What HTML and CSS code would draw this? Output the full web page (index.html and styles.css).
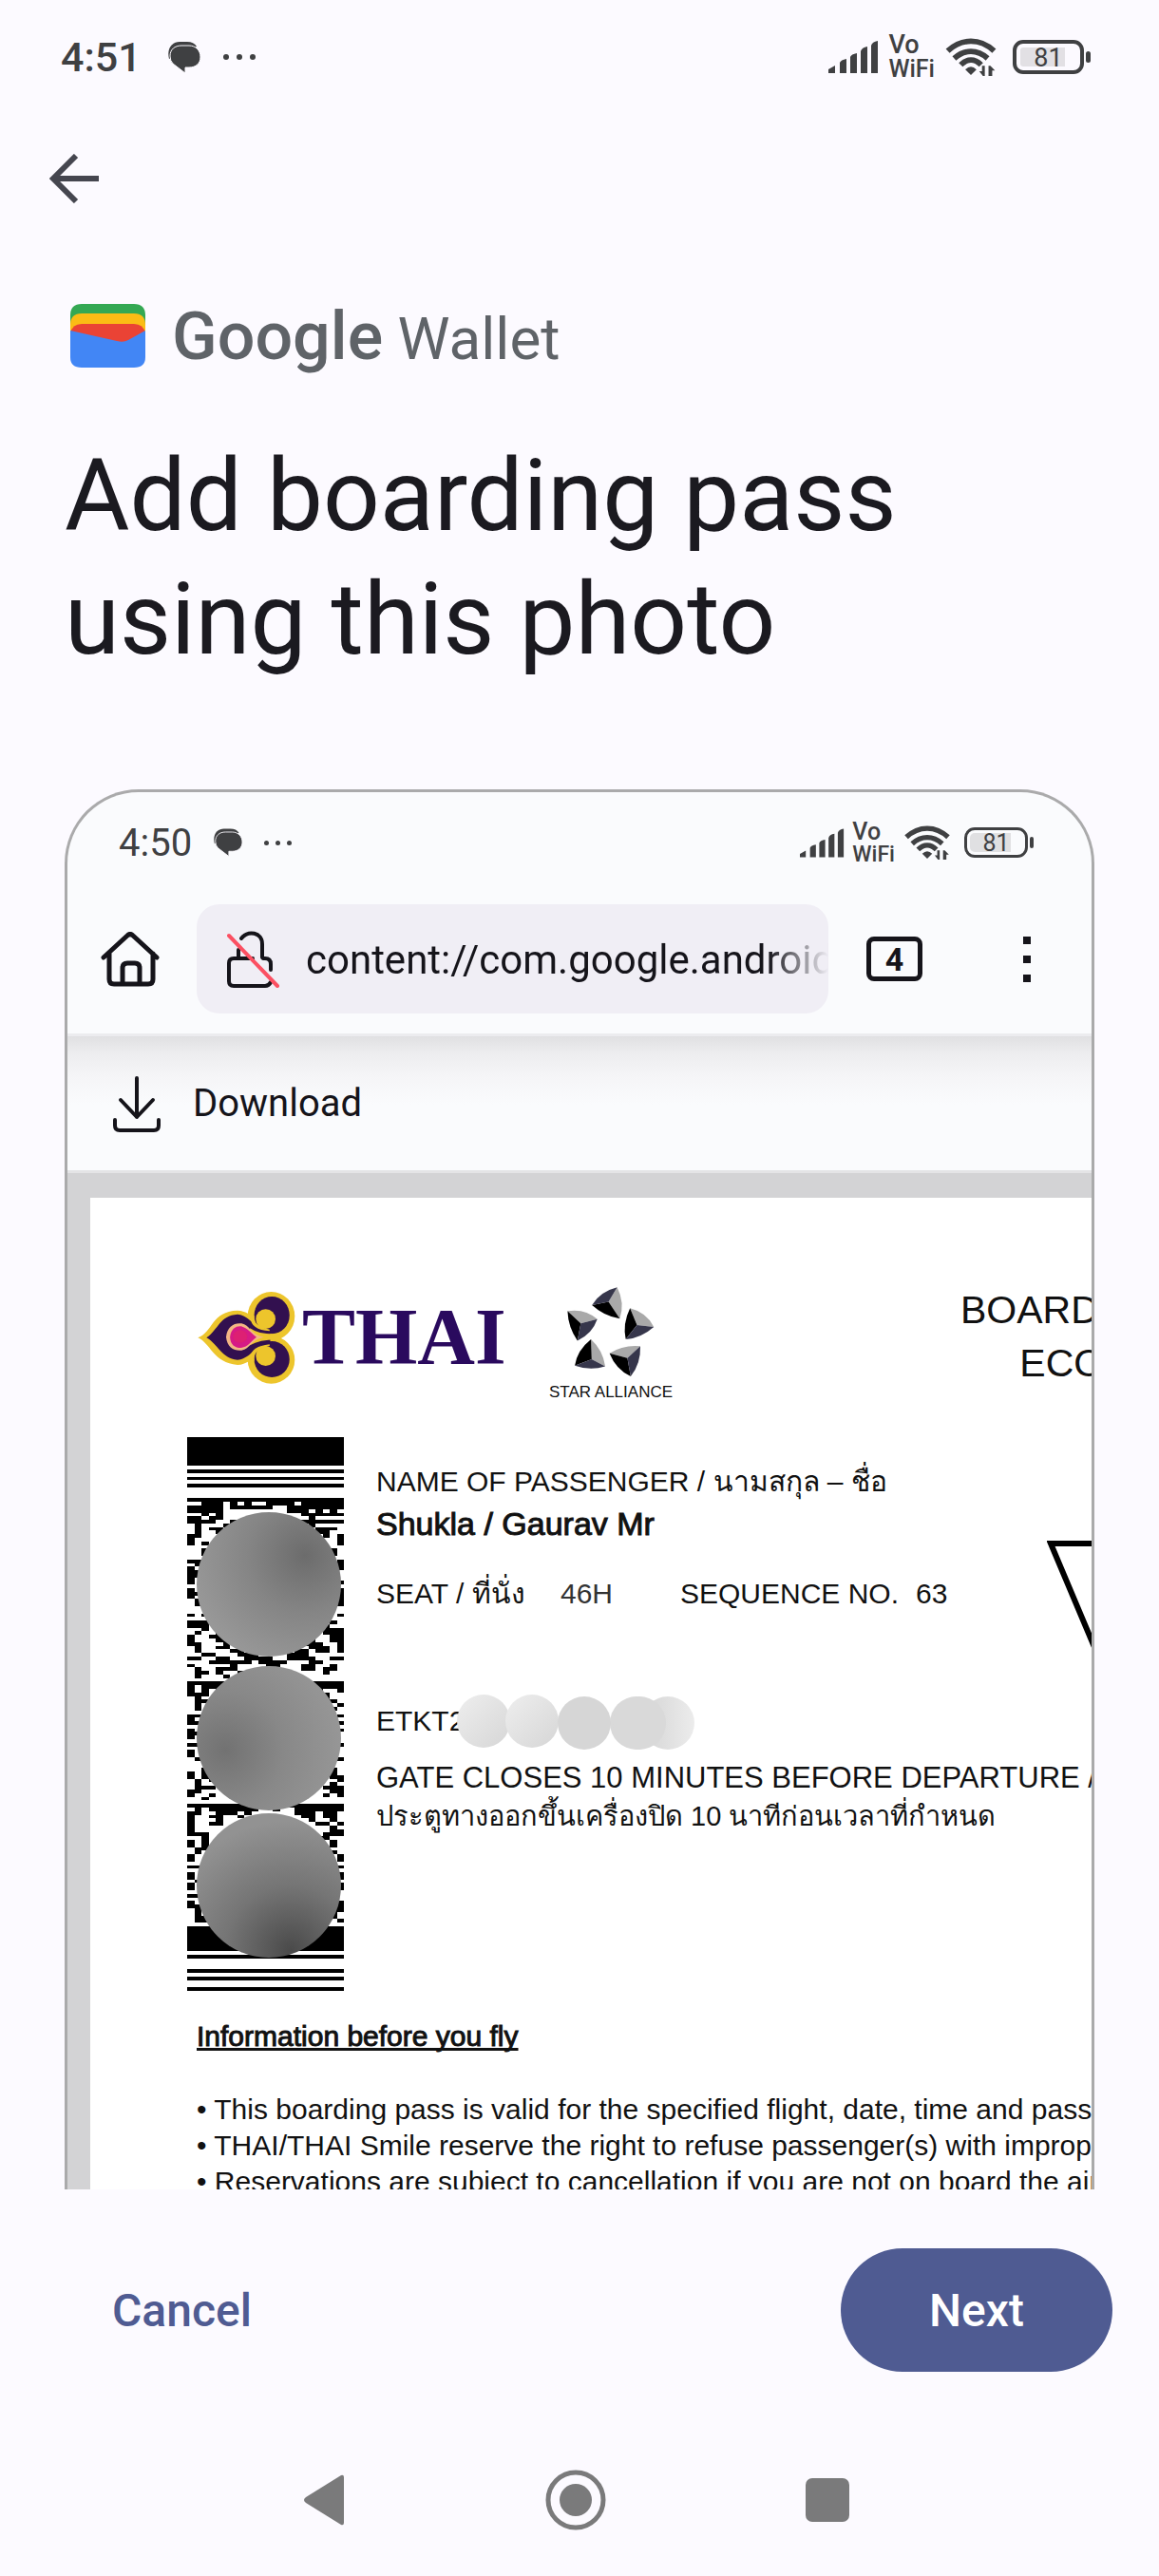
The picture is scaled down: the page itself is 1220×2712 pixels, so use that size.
FILE: index.html
```html
<!DOCTYPE html>
<html lang="en">
<head>
    <meta charset="UTF-8">
    <meta name="viewport" content="width=device-width, initial-scale=1.0">
    <title>Google Wallet</title>
    <link rel="stylesheet" href="styles.css">
</head>
<body>
    <!-- shared status bar icons -->
    <svg class="sprite" aria-hidden="true">
        <symbol id="chat" viewBox="0 0 34 33">
            <path d="M1 18C-2 6 5 0 12 0h8q7 0 10 5z" fill="currentColor"/>
            <path d="M2 15C2 8 7 4 14 4h8c7 0 12 5 12 12s-5 11-12 11h-4v6L5 23Q2 20 2 15z" fill="currentColor" stroke="#fcfaff" stroke-width="1"/>
        </symbol>
        <symbol id="signal" viewBox="0 0 53 34">
            <path d="M0 34v-4l7-4v8zM12 34V23q1-3 7-4v15zM23 34V17q1-3 7-4v21zM34 34V11q1-4 7-5v28zM45 34V5q1-4 7-5v34z" fill="currentColor"/>
        </symbol>
        <symbol id="wifi" viewBox="0 0 54 41">
            <g fill="none" stroke="currentColor" stroke-width="6">
                <path d="M2 14C17 0 37 0 52 14"/>
                <path d="M9 22c11-10 25-10 36 0"/>
                <path d="M16 29c7-7 15-7 22 0"/>
            </g>
            <path d="M21 34q6-6 12 0l-6 6z" fill="currentColor"/>
            <path d="M42 30v11h-2l-4-5h3v-6zM46 41V30h2l5 5h-3v6z" fill="currentColor"/>
        </symbol>
    </svg>

    <div class="status-bar">
        <span class="time">4:51</span>
        <svg class="chat"><use href="#chat"/></svg>
        <span class="more"><i></i><i></i><i></i></span>
        <svg class="signal"><use href="#signal"/></svg>
        <span class="vowifi"><span>Vo</span><br>WiFi</span>
        <svg class="wifi"><use href="#wifi"/></svg>
        <span class="battery">81</span>
    </div>

    <header class="app-bar">
        <button class="icon-button" type="button" aria-label="Back">
            <svg width="54" height="52" viewBox="0 0 54 52" fill="none" stroke="#45464f" stroke-width="6">
                <path d="M29 2L5 26l24 24M5 26h48"/>
            </svg>
        </button>
    </header>

    <main class="content">
        <div class="brand">
            <svg width="79" height="67" viewBox="0 0 79 67">
                <path d="M0 12Q0 0 12 0h55q12 0 12 12v30H0z" fill="#34a853"/>
                <path d="M0 22q0-12 12-12h55q12 0 12 12v20H0z" fill="#fbbc15"/>
                <path d="M0 31q2-10 12-10h55q10 0 12 10v12H0z" fill="#ea4335"/>
                <path d="M0 28l49 11q7 2 12-1l18-10v28q0 11-12 11H12Q0 67 0 56z" fill="#4286f5"/>
            </svg>
            <span class="brand-name"><b>Google</b> Wallet</span>
        </div>
        <h1>Add boarding pass<br>using this photo</h1>

        <section class="preview" aria-label="Photo">
            <div class="status-bar small">
                <span class="time">4:50</span>
                <svg class="chat"><use href="#chat"/></svg>
                <span class="more"><i></i><i></i><i></i></span>
                <svg class="signal"><use href="#signal"/></svg>
                <span class="vowifi"><span>Vo</span><br>WiFi</span>
                <svg class="wifi"><use href="#wifi"/></svg>
                <span class="battery">81</span>
            </div>

            <div class="toolbar">
                <button class="icon-button" type="button" aria-label="Home">
                    <svg width="62" height="58" viewBox="0 0 62 58" fill="none" stroke="#15141a" stroke-width="5" stroke-linecap="round" stroke-linejoin="round">
                        <path d="M3 27L28 4q3-3 6 0l25 23M9 23v27q0 5 5 5h36q5 0 5-5V23"/>
                        <path d="M23 54V38q0-5 5-5h8q5 0 5 5v16"/>
                    </svg>
                </button>
                <div class="url-box">
                    <svg width="56" height="60" viewBox="0 0 56 60" fill="none" stroke-width="5" stroke-linecap="round">
                        <path d="M15 8C22-1 37 1 37 14v14M12 20v9" stroke="#15141a" stroke-width="4"/>
                        <path d="M27 29H7q-5 0-5 5v19q0 5 5 5h33q4 0 6-4M38 29h2q6 0 6 6v6" stroke="#15141a" stroke-width="4"/>
                        <path d="M2 5l51 53" stroke="#fb5062" stroke-width="4"/>
                    </svg>
                    <input type="text" aria-label="Address" value="content://com.google.android">
                </div>
                <button class="tabs" type="button" aria-label="Tabs">4</button>
                <button class="menu" type="button" aria-label="Menu"><i></i><i></i><i></i></button>
            </div>

            <button class="download" type="button">
                <svg width="50" height="60" viewBox="0 0 50 60" fill="none" stroke="#15141a" stroke-width="4" stroke-linecap="round" stroke-linejoin="round">
                    <path d="M25 3v41M8 26l17 18 17-18M2 47v6q0 5 5 5h36q5 0 5-5v-6"/>
                </svg>
                Download
            </button>

            <div class="viewer">
                <article class="page">
                    <div class="page-head">
                        <div class="thai">
                            <svg width="105" height="100" viewBox="75 115 305 300" preserveAspectRatio="none">
                                <g fill="#edc52c">
                                    <ellipse cx="303" cy="198" rx="72" ry="77"/>
                                    <ellipse cx="303" cy="336" rx="72" ry="75"/>
                                    <path d="M79 266C125 248 120 182 200 180C250 183 262 230 330 266C262 300 250 350 200 352C125 345 118 284 79 266z"/>
                                </g>
                                <g fill="#32104f">
                                    <path d="M105 266C142 240 145 196 200 192C236 195 248 234 300 250L300 280C250 290 242 332 200 336C150 332 140 285 105 266z"/>
                                    <ellipse cx="305" cy="195" rx="54" ry="59"/>
                                    <ellipse cx="305" cy="334" rx="54" ry="57"/>
                                </g>
                                <!-- curls -->
                                <g fill="#edc52c">
                                    <ellipse cx="286" cy="207" rx="30" ry="31"/>
                                    <ellipse cx="286" cy="324" rx="30" ry="31"/>
                                    <path d="M252 196q-10 30 46 44l0 5q-58-4-58-42zM252 340q-10-34 46-48l0-5q-58 6-58 42z"/>
                                    <path d="M238 236q30 22 92 18v18q-60-2-92 18z"/>
                                </g>
                                <path d="M165 264C168 230 190 218 212 221C238 226 240 256 280 264C240 274 240 300 212 306C188 308 168 295 165 264z" fill="#f3b684"/>
                                <path d="M177 264C180 238 195 229 210 230C230 234 240 250 258 264C240 278 232 295 210 298C192 298 178 288 177 264z" fill="#d61a86"/>
                                <ellipse cx="208" cy="262" rx="22" ry="20" fill="#e3265f" opacity=".5"/>
                            </svg>
                            <span>THAI</span>
                        </div>
                        <div class="alliance">
                            <svg width="94" height="97" viewBox="1222 103 270 287" preserveAspectRatio="none">
                                <g fill="#a9a9a9">
                                    <path d="M1376 107Q1400 155 1384 204L1350 152z"/>
                                    <path d="M1415 172Q1465 185 1487 230L1436 224z"/>
                                    <path d="M1226 181Q1278 172 1316 206L1266 219z"/>
                                    <path d="M1297 269Q1333 303 1340 353L1299 331z"/>
                                    <path d="M1353 312Q1395 285 1446 290L1407 327z"/>
                                </g>
                                <g fill="#000">
                                    <path d="M1384 204Q1337 197 1300 162L1350 152z"/>
                                    <path d="M1415 172Q1392 220 1402 269L1436 224z"/>
                                    <path d="M1226 181Q1228 232 1256 273L1266 219z"/>
                                    <path d="M1297 269Q1255 303 1248 351L1299 331z"/>
                                    <path d="M1353 312Q1372 362 1417 384L1407 327z"/>
                                </g>
                                <g fill="#36364b">
                                    <path d="M1300 162Q1325 120 1376 107L1350 152z"/>
                                    <path d="M1402 269Q1450 264 1487 230L1436 224z"/>
                                    <path d="M1256 273Q1301 252 1316 206L1266 219z"/>
                                    <path d="M1248 351Q1295 368 1340 353L1299 331z"/>
                                    <path d="M1446 290Q1448 345 1417 384L1407 327z"/>
                                </g>
                            </svg>
                            <span>STAR ALLIANCE</span>
                        </div>
                        <div class="page-title">BOARDING PASS<br>ECONOMY</div>
                    </div>

                    <div class="pass">
                        <svg class="barcode" viewBox="0 0 165 583" role="img" aria-label="Barcode">
                            <defs>
                                <radialGradient id="blob-a" cx=".75" cy=".3" r=".8"><stop offset="0" stop-color="#6c6c6c"/><stop offset=".5" stop-color="#858585"/><stop offset="1" stop-color="#989898"/></radialGradient>
                                <radialGradient id="blob-b" cx=".2" cy=".58" r=".8"><stop offset="0" stop-color="#727272"/><stop offset=".5" stop-color="#888"/><stop offset="1" stop-color="#969696"/></radialGradient>
                                <radialGradient id="blob-c" cx=".65" cy=".95" r=".9"><stop offset="0" stop-color="#4a4a4a"/><stop offset=".5" stop-color="#757575"/><stop offset="1" stop-color="#929292"/></radialGradient>
                            </defs>
                            <svg width="165" height="583" viewBox="0 0 22 154" preserveAspectRatio="none" shape-rendering="crispEdges">
                                <!-- guard bars -->
                                <path d="M0 0h22v8H0zM0 9h22v1H0zM0 11h22v1H0zM0 13h22v1H0zM0 136h22v7H0zM0 144h22v1H0zM0 148h22v1H0zM0 150h22v1H0zM0 153h22v1H0z"/>
                                <!-- data rows -->
                                <path stroke="#000" fill="none" d="M0 17.5h22M2 18.5h3m1 0h1m1 0h1m2 0h4m1 0h6M0 19.5h5m1 0h6m2 0h8M0 20.5h5m9 0h3m1 0h1m1 0h1M2 21.5h1m1 0h1m11 0h6M0 22.5h2m1 0h2m12 0h1M0 23.5h4m2 0h1m9 0h6M1 24.5h1m3 0h2m10 0h1M1 25.5h1m1 0h2m13 0h2m0 0h1M1 26.5h1m2 0h1m13 0h2M0 27.5h2m17 0h1m1 0h1M0 28.5h1m20 0h1M0 29.5h1m1 0h1m18 0h1M2 31.5h1m17 0h1M2 32.5h1m17 0h1M0 34.5h3m18 0h1M1 35.5h1m19 0h1M0 36.5h1m1 0h1m18 0h1M0 37.5h2M0 38.5h2M0 39.5h1M0 40.5h1m20 0h1M0 42.5h1m20 0h1M0 43.5h2m19 0h1M0 44.5h1m20 0h1M1 45.5h1m19 0h1M1 46.5h1m18 0h2M0 49.5h1m1 0h1m18 0h1
                                M0 51.5h3m17 0h1M0 52.5h3m16 0h1M2 53.5h1m16 0h3M1 54.5h1m2 0h1m14 0h3M0 55.5h1m2 0h2m15 0h2M0 56.5h1m3 0h3m10 0h1m2 0h2M0 57.5h2m3 0h1m10 0h3m2 0h1M1 58.5h1m2 0h2m1 0h2m8 0h3m1 0h1M1 59.5h1m4 0h2m1 0h2m4 0h2m1 0h2m1 0h2M2 60.5h2m3 0h3m4 0h3M0 61.5h2m2 0h2m2 0h4m2 0h4m2 0h2M3 62.5h6m1 0h4m3 0h2M0 63.5h1m5 0h1m4 0h2m3 0h2m2 0h1M1 64.5h1m2 0h3m9 0h2m1 0h2M1 65.5h2m1 0h1m2 0h1m11 0h1M1 66.5h1m3 0h1M0 68.5h22M0 69.5h1m1 0h3m11 0h6M0 70.5h1m1 0h1m1 0h1m12 0h2m2 0h1M0 71.5h3m1 0h1m13 0h2M1 72.5h1m17 0h1M1 73.5h3m14 0h3M1 74.5h1m19 0h1M1 75.5h1m18 0h1M0 77.5h3m18 0h1M0 78.5h1m1 0h1M0 79.5h2m19 0h1M0 81.5h1m20 0h1M0 82.5h2M0 83.5h1M0 85.5h2m19 0h1M0 87.5h1M0 88.5h1M1 89.5h1m18 0h2M2 92.5h1m17 0h1M0 93.5h1m1 0h1m17 0h1M0 94.5h1m1 0h2m16 0h2M1 95.5h1m1 0h1m17 0h1M1 96.5h1m2 0h1m15 0h1M1 97.5h3m15 0h2m0 0h1M0 98.5h2m18 0h2M0 99.5h1m2 0h1m15 0h1m1 0h1M2 100.5h1
                                M0 102.5h22M1 103.5h1m1 0h7m2 0h1m2 0h7M0 104.5h2m2 0h3m1 0h1m6 0h3m1 0h2M0 105.5h1m2 0h2m2 0h1m8 0h2m1 0h2M0 106.5h1m3 0h1m12 0h1m2 0h1M0 107.5h1m2 0h2m13 0h2m1 0h1M0 108.5h1m19 0h1M0 109.5h1m19 0h2M0 110.5h3m16 0h3M2 111.5h1m15 0h2M0 112.5h1m1 0h1m17 0h1M0 113.5h1m1 0h1m17 0h1M1 114.5h2M1 115.5h1m18 0h1M0 116.5h1m20 0h1M0 117.5h1m20 0h1M0 119.5h2m18 0h2M0 121.5h1m20 0h1M0 122.5h1m20 0h1M1 123.5h1M0 124.5h1m20 0h1M0 125.5h1m20 0h1M0 127.5h2M0 129.5h1m20 0h1M0 130.5h2m19 0h1M1 131.5h1m18 0h2M1 132.5h1m18 0h1M1 133.5h3m15 0h2M1 134.5h2m18 0h1"/>
                            </svg>
                            <circle cx="86" cy="155" r="76" fill="url(#blob-a)"/>
                            <circle cx="86" cy="317" r="76" fill="url(#blob-b)"/>
                            <circle cx="86" cy="472" r="76" fill="url(#blob-c)"/>
                        </svg>
                        <div class="details">
                            <p class="label">NAME OF PASSENGER / นามสกุล – ชื่อ</p>
                            <p class="name">Shukla / Gaurav Mr</p>
                            <p class="seat">
                                <span class="seat-label">SEAT / ที่นั่ง</span>
                                <span class="seat-no">46H</span>
                                <span>SEQUENCE NO.</span>
                                <span class="sequence-no">63</span>
                            </p>
                            <p class="ticket">ETKT2
                                <svg width="252" height="60" viewBox="0 0 252 60">
                                    <defs>
                                        <linearGradient id="mask-a" x2="1" y2="1"><stop offset="0" stop-color="#eee"/><stop offset="1" stop-color="#d6d6d6"/></linearGradient>
                                        <linearGradient id="mask-b" x2="1"><stop offset="0" stop-color="#d4d4d4"/><stop offset="1" stop-color="#ececec"/></linearGradient>
                                    </defs>
                                    <circle cx="29" cy="29" r="28" fill="url(#mask-a)"/>
                                    <circle cx="80" cy="29" r="28" fill="url(#mask-a)"/>
                                    <circle cx="223" cy="31" r="28" fill="url(#mask-b)"/>
                                    <circle cx="190" cy="31" r="28" fill="#d9d9d9"/>
                                    <circle cx="193" cy="31" r="28" fill="#d9d9d9"/>
                                    <circle cx="135" cy="31" r="28" fill="#d6d6d6"/>
                                </svg>
                            </p>
                            <p class="gate">GATE CLOSES 10 MINUTES BEFORE DEPARTURE /</p>
                            <p class="gate-thai">ประตูทางออกขึ้นเครื่องปิด 10 นาทีก่อนเวลาที่กำหนด</p>
                        </div>
                        <svg class="triangle" width="210" height="300" viewBox="0 0 210 300" fill="none" stroke="#000" stroke-width="6">
                            <path d="M4 3h200L104 240z"/>
                        </svg>
                    </div>

                    <div class="notes">
                        <h2>Information before you fly</h2>
                        <ul>
                            <li>This boarding pass is valid for the specified flight, date, time and passenger</li>
                            <li>THAI/THAI Smile reserve the right to refuse passenger(s) with improper</li>
                            <li>Reservations are subject to cancellation if you are not on board the aircraft</li>
                        </ul>
                    </div>
                </article>
            </div>
        </section>
    </main>

    <footer class="actions">
        <button class="cancel" type="button">Cancel</button>
        <button class="next" type="button">Next</button>
    </footer>

    <nav class="nav-bar" aria-label="System">
        <button type="button" aria-label="Back">
            <svg width="44" height="54" viewBox="0 0 44 54" fill="#7a7a7b"><path d="M40 1q3-1 3 2v48q0 3-3 2L3 30q-4-3 0-6z"/></svg>
        </button>
        <button type="button" aria-label="Home">
            <svg width="64" height="64" viewBox="0 0 64 64" fill="#7a7a7b"><circle cx="32" cy="32" r="29" fill="none" stroke="#7a7a7b" stroke-width="5"/><circle cx="32" cy="32" r="17"/></svg>
        </button>
        <button type="button" aria-label="Recents">
            <svg width="46" height="46" viewBox="0 0 46 46" fill="#7a7a7b"><rect width="46" height="46" rx="7"/></svg>
        </button>
    </nav>
</body>
</html>
```
FILE: styles.css
```css
* {
    box-sizing: border-box;
}

body {
    margin: 0;
    height: 100vh;
    display: flex;
    flex-direction: column;
    overflow: hidden;
    background-color: #fcfaff;
    color: #1b1a20;
    font-family: Roboto, "Liberation Sans", sans-serif;
}
button {
    margin: 0;
    padding: 0;
    border: 0;
    background: none;
    color: inherit;
    font-family: inherit;
}
svg {
    display: block;
    flex: none;
}
.sprite {
    width: 0;
    height: 0;
}

/* status bar */
.status-bar {
    display: flex;
    align-items: center;
    flex: none;
    height: 120px;
    padding: 0 79px 0 64px;
    color: #3f4042;
}
.time {
    font-size: 43px;
    font-weight: 500;
}
.chat {
    width: 34px;
    height: 33px;
    margin-left: 28px;
}
.more {
    display: flex;
    gap: 8px;
    margin-left: 24px;
    margin-right: auto;
}
.more i {
    width: 6px;
    height: 6px;
    border-radius: 50%;
    background-color: currentColor;
}
.signal {
    width: 53px;
    height: 34px;
}
.vowifi {
    margin-left: 10px;
    font-size: 25px;
    line-height: 25px;
    font-weight: 500;
}
.vowifi span {
    font-size: 27px;
}
.wifi {
    width: 54px;
    height: 40px;
    margin-left: 11px;
}
.battery {
    position: relative;
    width: 75px;
    height: 36px;
    margin-left: 17px;
    padding: 4px;
    border: 4px solid currentColor;
    border-radius: 11px;
    background: linear-gradient(90deg, #e2e0e4 47px, transparent 47px) content-box no-repeat;
    font-size: 27px;
    line-height: 22px;
    text-align: center;
}
.battery::after {
    content: "";
    position: absolute;
    right: -11px;
    top: 8px;
    width: 5px;
    height: 12px;
    border-radius: 3px;
    background-color: currentColor;
}

.status-bar.small {
    height: 106px;
    padding: 0 67px 0 54px;
}
.small .time {
    font-size: 40px;
    font-weight: 400;
}
.small .chat {
    width: 30px;
    height: 30px;
    margin-left: 23px;
}
.small .more {
    gap: 7px;
    margin-left: 23px;
}
.small .more i {
    width: 5px;
    height: 5px;
}
.small .signal {
    width: 47px;
    height: 31px;
}
.small .vowifi {
    margin-left: 8px;
    font-size: 23px;
    line-height: 23px;
}
.small .vowifi span {
    font-size: 25px;
}
.small .wifi {
    width: 48px;
    height: 36px;
    margin-left: 10px;
}
.small .battery {
    width: 67px;
    height: 32px;
    margin-left: 15px;
    padding: 3px;
    border-width: 3px;
    background: linear-gradient(90deg, #e0e0e2 43px, transparent 43px) content-box no-repeat;
    font-size: 25px;
}
.small .battery::after {
    right: -9px;
    top: 7px;
    width: 4px;
}

/* app header */
.app-bar {
    flex: none;
    height: 136px;
    padding: 42px 0 0 51px;
}
.icon-button {
    display: block;
}
.content {
    display: flex;
    flex-direction: column;
    flex: 1;
    min-height: 0;
    padding: 64px 68px 0;
}
.brand {
    display: flex;
    align-items: center;
    gap: 28px;
    height: 67px;
    padding-left: 6px;
    color: #5f6368;
}
.brand-name {
    padding-top: 3px;
    font-size: 62px;
    line-height: 67px;
    white-space: nowrap;
}
.brand-name b {
    font-size: 70px;
    font-weight: 500;
}
h1 {
    margin: 71px 0 113px;
    font-size: 105px;
    line-height: 130px;
    font-weight: 400;
    white-space: nowrap;
}

/* photo of the browser window */
.preview {
    flex: 1;
    min-height: 0;
    overflow: hidden;
    border: 3px solid #aaaaab;
    border-bottom: 0;
    border-radius: 78px 78px 0 0;
    background-color: #fafbfd;
}
.toolbar {
    display: flex;
    align-items: center;
    height: 151px;
    padding: 0 58px 9px 35px;
    border-bottom: 3px solid #ececef;
}
.url-box {
    display: flex;
    align-items: center;
    flex: 1;
    min-width: 0;
    height: 115px;
    margin-left: 39px;
    padding-left: 32px;
    border-radius: 24px;
    background-color: #f0eef5;
}
.url-box input {
    flex: 1;
    min-width: 0;
    margin-left: 27px;
    padding: 2px 0 0;
    border: 0;
    outline: 0;
    background: none;
    color: #15141a;
    font-family: inherit;
    font-size: 42px;
    -webkit-mask-image: linear-gradient(270deg, transparent, #000 64px);
    mask-image: linear-gradient(270deg, transparent, #000 64px);
}
.tabs {
    width: 59px;
    height: 47px;
    margin-left: 40px;
    border: 5px solid #15141a;
    border-radius: 8px;
    color: #15141a;
    font-size: 34px;
    line-height: 36px;
    font-weight: 700;
}
.menu {
    display: flex;
    flex-direction: column;
    align-items: center;
    gap: 12px;
    width: 20px;
    margin-left: 100px;
}
.menu i {
    width: 8px;
    height: 8px;
    background-color: #15141a;
}
.download {
    display: flex;
    align-items: center;
    gap: 34px;
    width: 100%;
    height: 144px;
    padding-left: 48px;
    border-bottom: 3px solid #e4e4e6;
    background: linear-gradient(#e0e0e2, #ededef 18px, #f5f5f7 42px, #fafbfd 72px);
    color: #15141a;
    font-size: 40px;
}

/* document */
.viewer {
    padding: 26px 0 0 24px;
    background-color: #d3d3d5;
}
.page {
    padding: 90px 0 0 102px;
    background-color: #fff;
    color: #111;
    font-family: "Liberation Sans", Arial, "Noto Sans", sans-serif;
    font-size: 30px;
    white-space: nowrap;
}
.page-head {
    display: flex;
    align-items: flex-start;
    height: 162px;
    padding-left: 10px;
}
.thai {
    display: flex;
    align-items: center;
    gap: 6px;
    width: 323px;
    padding-top: 7px;
}
.thai span {
    color: #2a0a5e;
    font-family: "Liberation Serif", serif;
    font-size: 84px;
    line-height: 100px;
    font-weight: 700;
}
.alliance {
    display: flex;
    flex-direction: column;
    align-items: center;
    gap: 4px;
    width: 134px;
    flex: none;
    margin-left: 46px;
    padding-top: 3px;
    font-size: 17px;
    line-height: 22px;
}
.page-title {
    margin-left: 301px;
    font-size: 41px;
    line-height: 56px;
    text-align: center;
}
.pass {
    display: flex;
    align-items: flex-start;
}
.barcode {
    width: 165px;
    height: 583px;
}
.details {
    flex: none;
    width: 706px;
    margin-left: 34px;
    padding-top: 25px;
    line-height: 44px;
}
.details p {
    margin: 0;
}
.details .name {
    font-size: 34px;
    -webkit-text-stroke: 1px;
}
.details .seat {
    display: flex;
    margin-top: 30px;
}
.seat-label {
    width: 194px;
}
.seat-no {
    width: 126px;
    color: #333;
}
.sequence-no {
    margin-left: 18px;
}
.details .ticket {
    position: relative;
    margin-top: 90px;
}
/* circles that hide the ticket number */
.ticket svg {
    position: absolute;
    left: 84px;
    top: -7px;
}
.details .gate {
    margin-top: 17px;
    font-size: 31px;
    line-height: 41px;
}
.details .gate-thai {
    font-size: 29px;
    line-height: 41px;
}
.triangle {
    margin-top: 109px;
}
.notes {
    padding: 29px 0 60px 10px;
    line-height: 38px;
}
.notes h2 {
    margin: 0 0 39px;
    font-size: 30px;
    font-weight: 400;
    text-decoration: underline;
    text-decoration-skip-ink: none;
    -webkit-text-stroke: 1px;
}
.notes ul {
    margin: 0;
    padding: 0;
    list-style: none;
}
.notes li::before {
    content: "• ";
}

/* bottom buttons */
.actions {
    display: flex;
    justify-content: space-between;
    flex: none;
    height: 247px;
    padding: 62px 49px 55px 118px;
}
.cancel, .next {
    font-size: 48px;
    font-weight: 500;
}
.cancel {
    color: #4f5b92;
}
.next {
    width: 286px;
    border-radius: 65px;
    background-color: #4f5b92;
    color: #fff;
}
.nav-bar {
    display: flex;
    flex: none;
    height: 160px;
    padding: 0 217px 0 209px;
}
.nav-bar button {
    display: flex;
    align-items: center;
    justify-content: center;
    flex: 1;
}
```
